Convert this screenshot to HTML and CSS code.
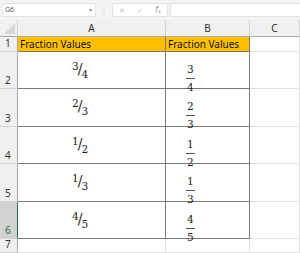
FILE: index.html
```html
<!DOCTYPE html>
<html>
    <head>
        <meta charset="utf-8">
        <link rel="stylesheet" href="styles.css">
    </head>
<body>
    <div class="formulaBar">
        <div class="nameBox">G6<span class="arrow">&#9662;</span></div>
        <div class="grip">&#8942;</div>
        <div class="fxBox">
            <span class="cancel">&#10005;</span>
            <span class="enter">&#10003;</span>
            <span class="fx">f<sub>x</sub></span>
        </div>
        <div class="formulaInput"></div>
    </div>

    <div class="sheet">
        <div class="corner"><span class="tri"></span></div>
        <div class="colHead">A</div>
        <div class="colHead">B</div>
        <div class="colHead">C</div>

        <div class="rowHead">1</div>
        <div class="cell title tbl">Fraction Values</div>
        <div class="cell title tbl">Fraction Values</div>
        <div class="cell"></div>

        <div class="rowHead">2</div>
        <div class="cell tbl colA"><span class="sfrac"><sup>3</sup><span class="slash">/</span><sub>4</sub></span></div>
        <div class="cell tbl colB"><span class="stack"><span class="num">3</span><span class="den">4</span></span></div>
        <div class="cell"></div>

        <div class="rowHead">3</div>
        <div class="cell tbl colA"><span class="sfrac"><sup>2</sup><span class="slash">/</span><sub>3</sub></span></div>
        <div class="cell tbl colB"><span class="stack"><span class="num">2</span><span class="den">3</span></span></div>
        <div class="cell"></div>

        <div class="rowHead">4</div>
        <div class="cell tbl colA"><span class="sfrac"><sup>1</sup><span class="slash">/</span><sub>2</sub></span></div>
        <div class="cell tbl colB"><span class="stack"><span class="num">1</span><span class="den">2</span></span></div>
        <div class="cell"></div>

        <div class="rowHead">5</div>
        <div class="cell tbl colA"><span class="sfrac"><sup>1</sup><span class="slash">/</span><sub>3</sub></span></div>
        <div class="cell tbl colB"><span class="stack"><span class="num">1</span><span class="den">3</span></span></div>
        <div class="cell"></div>

        <div class="rowHead selected">6</div>
        <div class="cell tbl colA"><span class="sfrac"><sup>4</sup><span class="slash">/</span><sub>5</sub></span></div>
        <div class="cell tbl colB"><span class="stack"><span class="num">4</span><span class="den">5</span></span></div>
        <div class="cell"></div>

        <div class="rowHead">7</div>
        <div class="cell"></div>
        <div class="cell"></div>
        <div class="cell"></div>
    </div>
</body>
</html>
```

FILE: styles.css
```css
body {
    margin: 0;
    width: 300px;
    height: 253px;
    overflow: hidden;
    background: #ffffff;
    font-family: "Noto Sans", "Liberation Sans", sans-serif;
    color: #222;
}

/* formula bar */
.formulaBar {
    display: flex;
    align-items: center;
    height: 20px;
    background: #f3f3f3;
}

.nameBox {
    width: 90px;
    height: 12px;
    margin-left: 2px;
    background: #fff;
    border: 1px solid #e2e2e2;
    font-size: 7px;
    line-height: 12px;
    color: #555;
    padding-left: 2px;
    display: flex;
    justify-content: space-between;
}

.arrow {
    font-size: 6px;
    color: #888;
    padding-right: 3px;
}

.grip {
    width: 16px;
    text-align: center;
    font-size: 8px;
    color: #c8c8c8;
}

.fxBox {
    width: 54px;
    height: 12px;
    background: #fff;
    border: 1px solid #e2e2e2;
    display: flex;
    align-items: center;
    justify-content: space-around;
    font-size: 7px;
    color: #c4c4c4;
}

.fxBox .fx {
    font-family: "DejaVu Serif", serif;
    font-style: italic;
    color: #777;
    font-size: 7px;
}

.fxBox .fx sub {
    font-size: 5px;
}

.formulaInput {
    flex: 1;
    height: 12px;
    margin-left: 2px;
    background: #fff;
    border: 1px solid #e2e2e2;
    border-right: none;
}

/* sheet */
.sheet {
    display: grid;
    grid-template-columns: 18px 148px 84px 50px;
    grid-template-rows: 17px 15px 37px 38px 37px 38px 37px 14px;
}

.corner {
    background: #f0f0f0;
    border-right: 1px solid #d4d4d4;
    border-bottom: 1px solid #ababab;
    position: relative;
}

.tri {
    position: absolute;
    right: 2px;
    bottom: 2px;
    width: 0;
    height: 0;
    border-left: 11px solid transparent;
    border-bottom: 11px solid #d6d6d6;
}

.colHead {
    background: #f0f0f0;
    border-right: 1px solid #d4d4d4;
    border-bottom: 1px solid #ababab;
    font-size: 10px;
    text-align: center;
    line-height: 17px;
    color: #333;
}

.rowHead {
    background: #f0f0f0;
    border-right: 1px solid #ababab;
    border-bottom: 1px solid #d4d4d4;
    font-size: 10px;
    color: #333;
    display: flex;
    align-items: flex-end;
    padding-left: 5px;
    padding-bottom: 1px;
}

.rowHead.selected {
    background: #d2d2d2;
    color: #217346;
    border-right: 1px solid #217346;
}

.cell {
    border-right: 1px solid #e1e1e1;
    border-bottom: 1px solid #e1e1e1;
}

.cell.tbl {
    border-right: 1px solid #7a7a7a;
    border-bottom: 1px solid #7a7a7a;
}

.title {
    background: #ffc000;
    font-size: 10px;
    line-height: 15px;
    padding-left: 2px;
    color: #111;
}

.colA {
    padding-left: 54px;
    padding-top: 5px;
}

.colB {
    padding-left: 20px;
    padding-top: 4px;
}

.sfrac {
    font-family: "DejaVu Serif", "Liberation Serif", serif;
    font-size: 11px;
    color: #222;
}

.sfrac sup,
.sfrac sub {
    font-size: 10.5px;
}

.sfrac sup {
    vertical-align: 4px;
}

.sfrac sub {
    vertical-align: -4px;
}

.sfrac .slash {
    font-size: 14px;
    margin: 0 -1px;
}

.stack {
    display: inline-flex;
    flex-direction: column;
    align-items: center;
    font-family: "DejaVu Serif", "Liberation Serif", serif;
    font-size: 10.5px;
    line-height: 12px;
    color: #222;
}

.stack .num {
    border-bottom: 1px solid #555;
    padding: 0 1px 3px;
}

.stack .den {
    padding-top: 2px;
}
```
